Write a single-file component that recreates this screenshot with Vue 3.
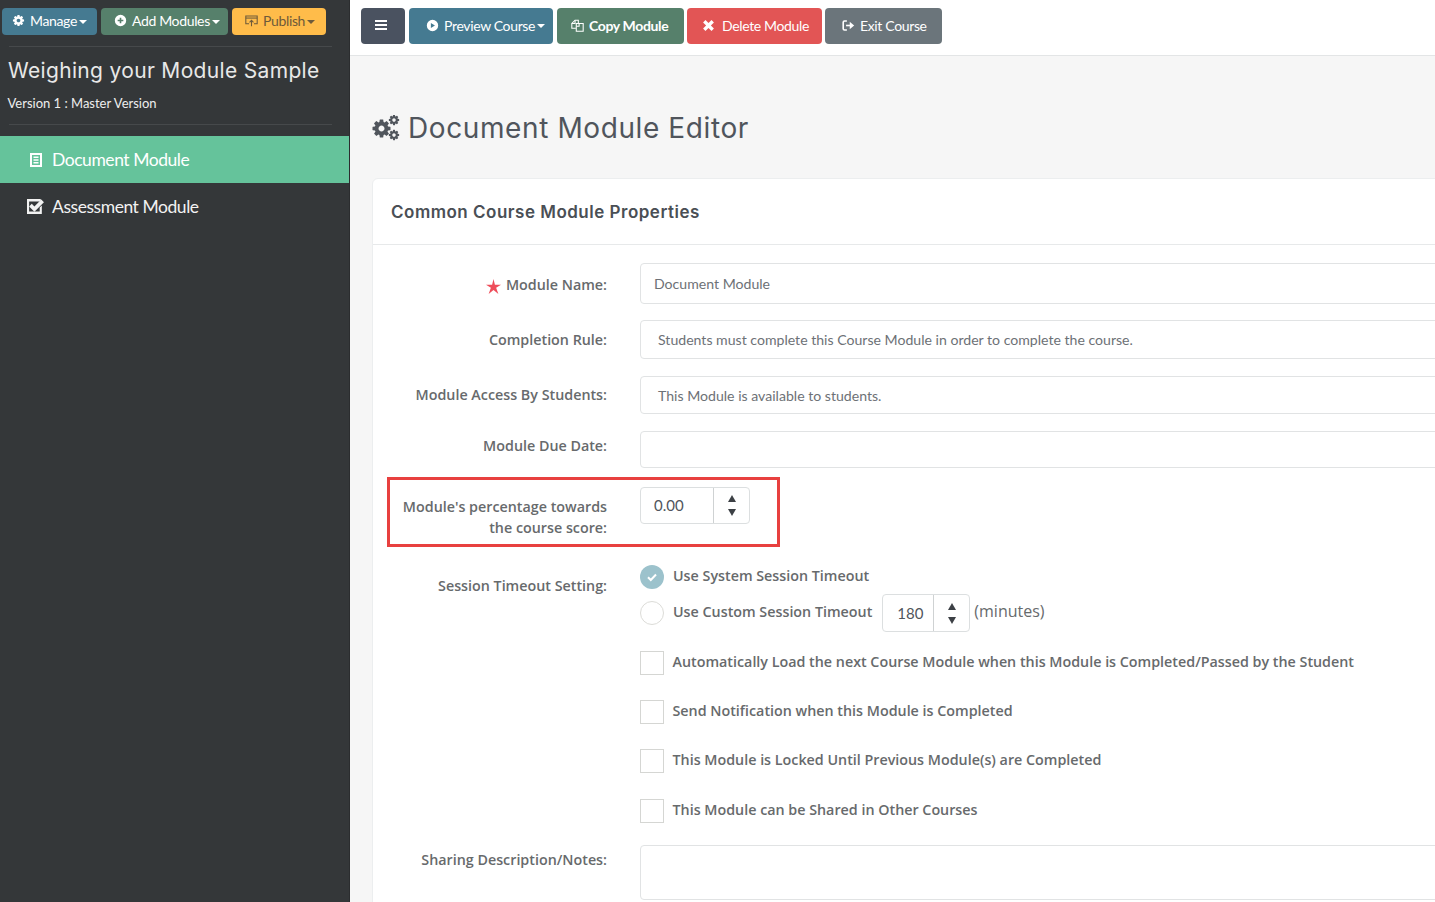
<script setup>
const cog = 'M1152 896q0-106-75-181t-181-75-181 75-75 181 75 181 181 75 181-75 75-181zm512-109v222q0 12-8 23t-20 13l-185 28q-19 54-39 91 35 50 107 138 10 12 10 25t-9 23q-27 37-99 108t-94 71q-12 0-26-9l-138-108q-44 23-91 38-16 136-29 186-7 28-36 28h-222q-14 0-24.500-8.500t-11.500-21.500l-28-184q-49-16-90-37l-141 107q-10 9-25 9-14 0-25-11-126-114-165-168-7-10-7-23 0-12 8-23 15-21 51-66.500t54-70.500q-27-50-41-99l-183-27q-13-2-21-12.500t-8-23.500v-222q0-12 8-23t19-13l186-28q14-46 39-92-40-57-107-138-10-12-10-24 0-10 9-23 26-36 98.500-107.500t94.500-71.500q13 0 26 10l138 107q44-23 91-38 16-136 29-186 7-28 36-28h222q14 0 24.500 8.500t11.500 21.500l28 184q49 16 90 37l142-107q9-9 24-9 13 0 25 10 129 119 165 170 7 8 7 22 0 12-8 23-15 21-51 66.500t-54 70.500q26 50 41 98l183 28q13 2 21 12.500t8 23.500z'

const options = [
  { text: 'Automatically Load the next Course Module when this Module is Completed/Passed by the Student', gap: 25 },
  { text: 'Send Notification when this Module is Completed', gap: 25 },
  { text: 'This Module is Locked Until Previous Module(s) are Completed', gap: 26 },
  { text: 'This Module can be Shared in Other Courses', gap: 22 }
]
</script>

<template>
  <div class="page">
    <aside class="sidebar">
      <div class="side-buttons">
        <button class="btn small teal manage">
          <svg class="ico" viewBox="0 0 1792 1792"><path :d="cog" /></svg>
          Manage<i class="caret"></i>
        </button>
        <button class="btn small green add">
          <svg class="ico" viewBox="0 0 16 16"><path fill-rule="evenodd" d="M8 1a7 7 0 1 0 0 14A7 7 0 0 0 8 1zM7 4.500h2V7h2.500v2H9v2.500H7V9H4.500V7H7z" /></svg>
          Add Modules<i class="caret"></i>
        </button>
        <button class="btn small amber publish">
          <svg class="ico line" viewBox="0 0 16 16"><path d="M5 12H1V2.500h14V12h-4" /><path d="M1 5h14" /><path d="M8 15V8M5.600 10.200 8 7.800l2.400 2.400" /></svg>
          Publish<i class="caret"></i>
        </button>
      </div>
      <div class="course-info">
        <h1>Weighing your Module Sample</h1>
        <p>Version 1 : Master Version</p>
      </div>
      <nav class="side-nav">
        <a class="active">
          <svg class="nav-ico" viewBox="1 1 12 14"><path fill-rule="evenodd" d="M1 1h12v14H1zM3 3v10h8V3zM4.500 4.500h5V6h-5zM4.500 7.300h5v1.500h-5zM4.500 10h5v1.500h-5z" /></svg>
          Document Module
        </a>
        <a>
          <svg class="nav-ico wide" viewBox="1 0 17 16"><path d="M1 1h13v2.200H3v9.600h10V9l2-2v8H1z" /><path d="M5.500 5.500 8 8l6.500-6.500L17 4l-9 9-5-5z" /></svg>
          Assessment Module
        </a>
      </nav>
    </aside>

    <main class="main">
      <header class="topbar">
        <button class="btn bars" aria-label="Menu">
          <svg class="ico" viewBox="0 0 12 12"><path d="M0 1h12v2H0zM0 5h12v2H0zM0 9h12v2H0z" /></svg>
        </button>
        <button class="btn teal preview">
          <svg class="ico" viewBox="0 0 16 16"><path fill-rule="evenodd" d="M8 1a7 7 0 1 0 0 14A7 7 0 0 0 8 1zM6 4.800l5 3.200-5 3.200z" /></svg>
          Preview Course<i class="caret"></i>
        </button>
        <button class="btn green copy">
          <svg class="ico line" viewBox="0 0 16 16"><path d="M6 11.500H1V5.500L5 1.500h4V5" /><path d="M5 1.500v4H1" /><path d="M6.500 5.500h8.500V15H6.500z" /><path d="M10 5.500V9H6.500" /></svg>
          Copy Module
        </button>
        <button class="btn red delete">
          <svg class="ico" viewBox="0 0 12 12"><path d="M1 3.200 3.200 1 6 3.800 8.800 1 11 3.200 8.200 6 11 8.800 8.800 11 6 8.200 3.200 11 1 8.800 3.800 6z" /></svg>
          Delete Module
        </button>
        <button class="btn grey exit">
          <svg class="ico line thick" viewBox="0 0 16 16"><path d="M6 2.500H3A1.500 1.500 0 0 0 1.500 4v8A1.500 1.500 0 0 0 3 13.500h3" /><path d="M5 8h6" /><path class="solid" d="M9.500 3.500 15 8l-5.500 4.500z" /></svg>
          Exit Course
        </button>
      </header>

      <div class="content">
        <h2 class="page-title">
          <svg class="gears" viewBox="0 0 28 26">
            <svg x="-1" y="3" width="21" height="21" viewBox="0 0 1792 1792"><path :d="cog" /></svg>
            <svg x="16" y="-1" width="12" height="12" viewBox="0 0 1792 1792"><path :d="cog" /></svg>
            <svg x="16" y="14" width="12" height="12" viewBox="0 0 1792 1792"><path :d="cog" /></svg>
          </svg>
          Document Module Editor
        </h2>

        <section class="card">
          <div class="card-head">Common Course Module Properties</div>
          <div class="card-body">
            <div class="row name-row">
              <label>
                <svg class="star" viewBox="0 0 16 16"><path d="m8 0 1.500 6H16l-5.200 3.200L13.200 16 8 11.600 2.800 16l2.400-6.800L0 6h6.500z" /></svg>
                Module Name:
              </label>
              <div class="field plain h41">Document Module</div>
            </div>
            <div class="row rule-row">
              <label>Completion Rule:</label>
              <div class="field h39">Students must complete this Course Module in order to complete the course.</div>
            </div>
            <div class="row access-row">
              <label>Module Access By Students:</label>
              <div class="field h38">This Module is available to students.</div>
            </div>
            <div class="row due-row">
              <label>Module Due Date:</label>
              <div class="field h37"></div>
            </div>

            <div class="row percent-row">
              <label>Module's percentage towards the course score:</label>
              <div class="spinner percent">
                <span class="spin-value">0.00</span>
                <span class="spin-arrows"><i class="up"></i><i class="down"></i></span>
              </div>
            </div>

            <div class="row session-row">
              <label>Session Timeout Setting:</label>
              <div class="session">
                <div class="radio-line first">
                  <span class="radio checked">
                    <svg viewBox="0 0 12 12" fill="none" stroke="#fff" stroke-width="2"><path d="M2 6.200 4.800 9 10 3.500" /></svg>
                  </span>
                  <span class="opt">Use System Session Timeout</span>
                </div>
                <div class="radio-line">
                  <span class="radio"></span>
                  <span class="opt">Use Custom Session Timeout</span>
                  <div class="spinner minutes">
                    <span class="spin-value">180</span>
                    <span class="spin-arrows"><i class="up"></i><i class="down"></i></span>
                  </div>
                  <span class="unit">(minutes)</span>
                </div>
              </div>
            </div>

            <div class="options">
              <div v-for="o in options" :key="o.text" class="check-line" :style="{ marginBottom: o.gap + 'px' }">
                <span class="check"></span>
                <span class="opt">{{ o.text }}</span>
              </div>
            </div>

            <div class="row notes-row">
              <label>Sharing Description/Notes:</label>
              <div class="field notes"></div>
            </div>
          </div>
        </section>
      </div>
    </main>
  </div>
</template>

<style>
html, body {
  margin: 0;
  overflow: hidden;
}
</style>

<style scoped>
* {
  box-sizing: border-box;
}

.page {
  display: flex;
  width: 1435px;
  height: 902px;
  overflow: hidden;
  font-family: Lato, "Liberation Sans", sans-serif;
  background: #f6f6f6;
}

.sidebar {
  flex: 0 0 349px;
  background: #343739;
  color: #eee;
}

.side-buttons {
  display: flex;
  gap: 4px;
  padding: 8px 0 0 2px;
}

.btn {
  display: flex;
  align-items: center;
  border: 0;
  border-radius: 4px;
  padding: 0 0 2px;
  color: #fff;
  font-family: Lato, "Liberation Sans", sans-serif;
  font-size: 14px;
  letter-spacing: -0.35px;
  white-space: nowrap;
}

.btn.small {
  height: 27px;
}

.manage { width: 95px; padding-left: 10px; }
.add { width: 127px; padding-left: 13px; }
.publish { width: 94px; padding-left: 13px; }

.ico {
  width: 13px;
  height: 13px;
  margin-right: 5px;
  fill: currentColor;
  flex: none;
}

.ico.line {
  fill: none;
  stroke: currentColor;
  stroke-width: 1.3;
}

.ico.thick {
  stroke-width: 2;
}

.ico .solid {
  fill: currentColor;
  stroke: none;
}

.caret {
  width: 0;
  height: 0;
  margin: 2px 0 0 2px;
  border-top: 4px solid currentColor;
  border-left: 4px solid transparent;
  border-right: 4px solid transparent;
}

.teal { background: #457a91; }
.green { background: #56806b; }
.amber { background: #ffbc4a; color: #6e5a3a; }
.red { background: #e25555; }
.grey { background: #6b757b; }

.course-info {
  margin: 11px 17px 11px 9px;
  padding: 11px 0 12px 0;
  border-top: 1px solid #46494b;
  border-bottom: 1px solid #46494b;
}

.course-info h1 {
  margin: 0 0 10px -1px;
  font-family: Inter, "Liberation Sans", sans-serif;
  font-size: 21px;
  line-height: 26px;
  font-weight: 400;
  letter-spacing: 0.33px;
  white-space: nowrap;
  color: #e8e8e8;
}

.course-info p {
  margin: 0 0 0 -1.500px;
  font-size: 13px;
  line-height: 18px;
}

.side-nav a {
  display: flex;
  align-items: center;
  height: 47px;
  padding-left: 30px;
  color: #f2f2f2;
  font-size: 17.500px;
  letter-spacing: -0.45px;
}

.side-nav a.active {
  background: #65c39b;
  color: #fff;
}

.nav-ico {
  width: 12px;
  height: 14px;
  margin-right: 10px;
  fill: currentColor;
  flex: none;
}

.nav-ico.wide {
  width: 18px;
  height: 17px;
  margin-left: -3px;
  margin-right: 7px;
}

.main {
  flex: 1;
  min-width: 0;
  border-left: 1px solid #2b2d2f;
}

.topbar {
  display: flex;
  gap: 3px;
  height: 56px;
  padding: 8px 0 0 11px;
  background: #fff;
  border-bottom: 1px solid #e3e5e6;
}

.topbar .btn {
  height: 36px;
}

.bars { width: 44px; justify-content: center; background: #4a5260; padding-right: 4px; }
.bars .ico { margin: 0; width: 12px; height: 12px; }
.preview { width: 144px; margin-left: 1px; padding-left: 17px; }
.copy { width: 127px; margin-left: 1px; padding-left: 14px; font-weight: 700; }
.delete { width: 135px; padding-left: 15px; }
.exit { width: 117px; padding-left: 17px; }
.delete .ico { margin-right: 7px; }
.exit .ico { margin-right: 5px; }

.content {
  padding-left: 22px;
}

.page-title {
  display: flex;
  align-items: center;
  height: 122px;
  margin: 0;
  padding-top: 21px;
  font-family: Inter, "Liberation Sans", sans-serif;
  font-size: 28px;
  font-weight: 400;
  letter-spacing: 0.6px;
  color: #50555c;
  white-space: nowrap;
}

.gears {
  width: 28px;
  height: 26px;
  margin-right: 8px;
  fill: #50555c;
}

.card {
  width: 1200px;
  background: #fff;
  border: 1px solid #eceeef;
  border-radius: 6px;
}

.card-head {
  height: 66px;
  padding-left: 18px;
  border-bottom: 1px solid #e7e9ea;
  font-family: Inter, "Liberation Sans", sans-serif;
  font-size: 17px;
  font-weight: 600;
  letter-spacing: 0.5px;
  line-height: 67px;
  color: #4a4f55;
}

.card-body {
  padding: 18px 0 40px;
}

.row {
  display: grid;
  grid-template-columns: 234px 1fr;
  column-gap: 33px;
}

.row label {
  padding-top: 11px;
  text-align: right;
  font-family: "Open Sans", "Liberation Sans", sans-serif;
  font-size: 14.300px;
  font-weight: 600;
  line-height: 21px;
  color: #676a6c;
}

.star {
  width: 15px;
  height: 15px;
  margin-right: 1px;
  fill: #ee4d5a;
  vertical-align: -4px;
}

.field {
  border: 1px solid #e1e3e4;
  border-radius: 4px;
  font-size: 14.100px;
  color: #6d7176;
  padding-left: 17px;
  display: flex;
  align-items: center;
}

.field.plain { padding-left: 13px; }
.h41 { height: 41px; }
.h39 { height: 39px; }
.h38 { height: 38px; }
.h37 { height: 37px; }

.name-row { margin-bottom: 16px; }
.rule-row { margin-bottom: 17px; }
.access-row { margin-bottom: 17px; }
.due-row { margin-bottom: 19px; }
.rule-row label { padding-top: 9px; }
.access-row label { padding-top: 0; line-height: 38px; }
.due-row label { padding-top: 4px; }

.percent-row {
  position: relative;
  height: 60px;
  margin-bottom: 18px;
}

.percent-row::after {
  content: "";
  position: absolute;
  left: 14px;
  top: -10px;
  width: 393px;
  height: 70px;
  box-sizing: border-box;
  border: 3px solid #e8403f;
}

.percent-row label {
  padding-top: 9px;
  padding-left: 26px;
}

.spinner {
  display: flex;
  height: 37px;
  border: 1px solid #dcdfe0;
  border-radius: 4px;
  background: #fff;
}

.percent { width: 110px; }

.spin-value {
  flex: 1;
  padding-left: 13px;
  font-size: 15px;
  line-height: 35px;
  color: #50555c;
}

.spin-arrows {
  flex: 0 0 36px;
  display: flex;
  flex-direction: column;
  align-items: center;
  justify-content: center;
  gap: 7px;
  border-left: 1px solid #cfd2d3;
}

.up, .down {
  width: 0;
  height: 0;
  border-left: 4px solid transparent;
  border-right: 4px solid transparent;
}

.up { border-bottom: 7px solid #3c4045; }
.down { border-top: 7px solid #3c4045; }

.session-row {
  margin-bottom: 19px;
}

.session-row label {
  padding-top: 10px;
}

.radio-line {
  display: flex;
  align-items: center;
  height: 38px;
}

.radio-line.first {
  height: 24px;
  margin-bottom: 5px;
}

.radio {
  flex: none;
  display: flex;
  align-items: center;
  justify-content: center;
  width: 24px;
  height: 24px;
  margin-right: 9px;
  border: 1px solid #dcdcd8;
  border-radius: 50%;
  background: #fff;
}

.radio.checked {
  border: 0;
  background: #9cc2cc;
}

.radio svg {
  width: 12px;
  height: 12px;
}

.opt {
  padding-bottom: 4px;
  font-family: "Open Sans", "Liberation Sans", sans-serif;
  font-size: 14.300px;
  font-weight: 600;
  color: #676a6c;
  white-space: nowrap;
}

.minutes {
  width: 88px;
  height: 38px;
  margin-left: 10px;
}

.minutes .spin-value {
  padding-left: 14px;
  line-height: 36px;
}

.unit {
  margin-left: 4px;
  font-family: "Open Sans", "Liberation Sans", sans-serif;
  font-size: 16px;
  color: #676a6c;
  position: relative;
  top: -2px;
}

.options {
  padding-left: 267px;
}

.check-line {
  display: flex;
  align-items: center;
  height: 24px;
}

.check {
  flex: none;
  width: 24px;
  height: 24px;
  margin-right: 8.500px;
  border: 1px solid #d5d6d3;
}

.notes {
  height: 55px;
}

.notes-row label {
  padding-top: 4px;
}
</style>
